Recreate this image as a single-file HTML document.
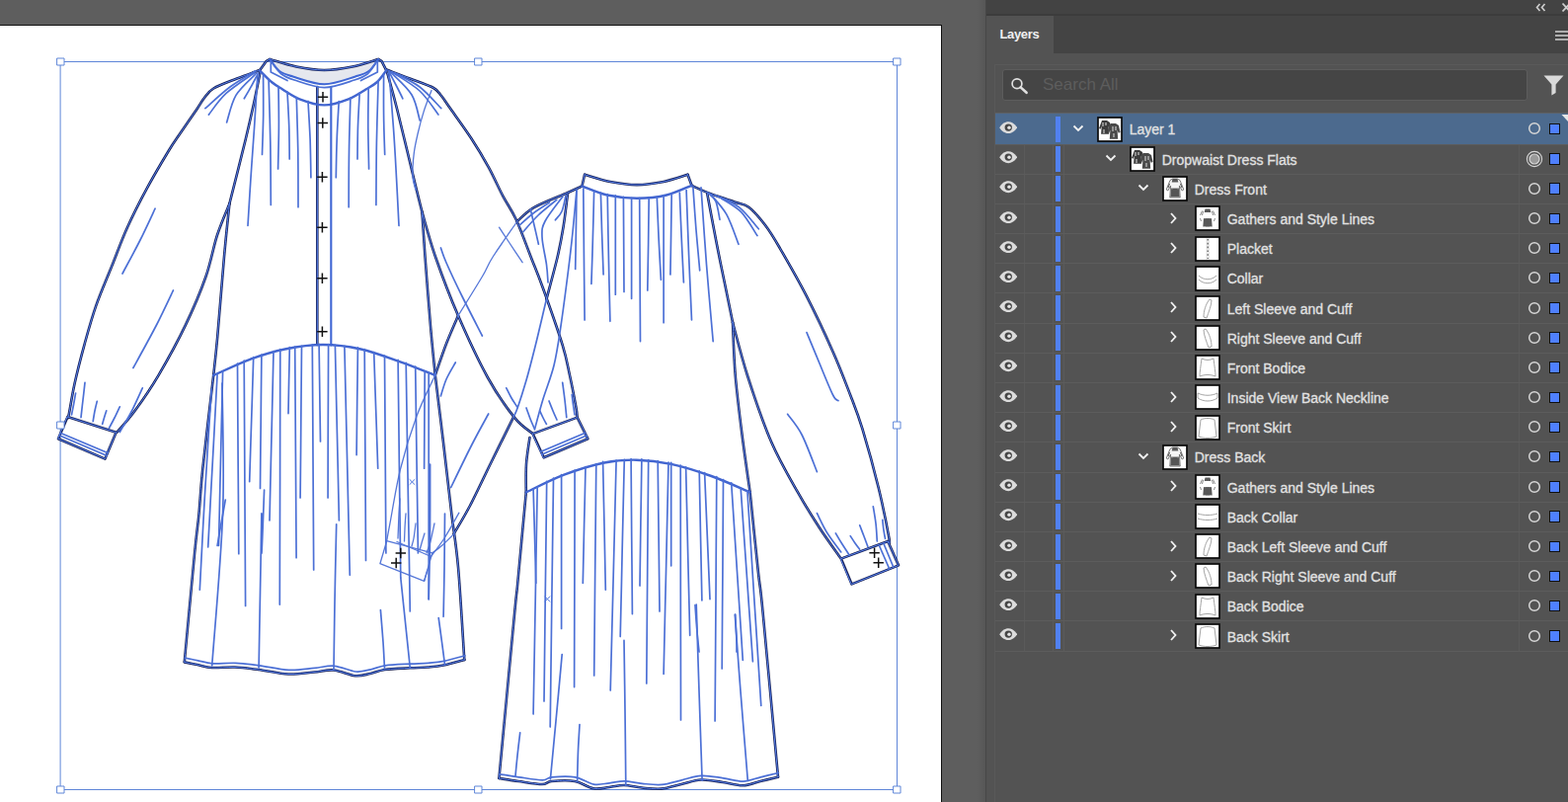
<!DOCTYPE html>
<html><head><meta charset="utf-8"><title>Layers</title>
<style>
html,body{margin:0;padding:0}
body{width:1588px;height:812px;overflow:hidden;background:#5e5e5e;position:relative;font-family:"Liberation Sans",sans-serif;font-size:14px;color:#dedede}
#ab{position:absolute;left:0;top:24.8px;width:953px;height:800px;background:#fff;border-top:1.8px solid #111;border-right:1.7px solid #111}
#art{position:absolute;left:0;top:0;width:1000px;height:812px}
#gut{position:absolute;left:990px;top:0;width:8px;height:812px;background:linear-gradient(to right,#5e5e5e,#565656)}
#pn{position:absolute;left:998px;top:0;width:590px;height:812px;background:#535353;border-left:1.5px solid #474747;box-sizing:border-box}
#top{position:absolute;left:0;top:0;width:590px;height:13.5px;background:#434343;border-bottom:2.5px solid #3c3c3c}
#tabs{position:absolute;left:0;top:16px;width:590px;height:38px;background:#444444}
#tab{position:absolute;left:0;top:0;width:68px;height:39px;background:#535353}
#tab span{position:absolute;left:13.5px;top:10.5px;font-size:13px;color:#f0f0f0;font-weight:bold;letter-spacing:-0.35px}
#sb{position:absolute;left:16px;top:70px;width:532px;height:32px;background:#454545;border:1px solid #5d5d5d;border-radius:3px;box-sizing:border-box}
#sb span{position:absolute;left:40px;top:5px;font-size:17px;color:#5d5d5d;line-height:20px}
#lst{position:absolute;left:8px;top:65px;width:582px;height:747px;border-left:1px solid #595959;border-top:1px solid #595959}
.row{position:absolute;left:9px;width:581px;height:30.18px;box-sizing:border-box;border-bottom:1px solid #5c5c5c}
.row.sel{background:#4c6a8e}
.row.sel::before{content:'';position:absolute;left:0;top:-2px;width:100%;height:2px;background:#4c6a8e;border-top:1px solid #5d6268}
.row .eye{position:absolute;left:3.6px;top:6.6px;width:18.5px;height:12.4px}
.row .bar{position:absolute;left:61.2px;top:1.6px;width:5.2px;height:26px;background:#5181f1}
.row .chev{position:absolute;top:7.7px;width:12px;height:12px;fill:none;stroke:#f2f2f2;stroke-width:1.8}
.row .th{position:absolute;top:1.4px;width:26px;height:26px}
.row .nm{position:absolute;top:7.1px;margin-left:-0.3px;line-height:16px;white-space:nowrap;color:#e2e2e2;-webkit-text-stroke:0.3px #e2e2e2}
.row .tg{position:absolute;left:537px;top:5.1px;width:18px;height:18px}
.row .sq{position:absolute;left:560.5px;top:8.6px;width:9.5px;height:9.5px;background:#4f80ff;border:1px solid #101010}
.vl{position:absolute;top:116px;width:1px;height:543px;background:#5a5a5a}
</style></head><body>
<div id="ab"></div>
<svg id="art" viewBox="0 0 1000 812" fill="none" stroke-linecap="round" stroke-linejoin="round">
<path d="M273.3 60.0C277.8 61.2 290.8 65.7 300.0 67.5C309.2 69.3 318.9 71.0 328.4 71.0C337.9 71.0 347.9 69.3 357.0 67.5C366.1 65.7 378.8 61.2 383.1 60.0 " fill="none"/>
<path d="M273.3 60.0C277.8 61.2 290.8 65.7 300.0 67.5C309.2 69.3 318.9 71.0 328.4 71.0C337.9 71.0 347.9 69.3 357.0 67.5C366.1 65.7 378.8 61.2 383.1 60.0L383.1 60.0C381.5 62.0 377.4 69.1 373.5 72.0C369.6 74.9 367.5 75.3 360.0 77.5C352.5 79.7 339.0 85.2 328.4 85.2C317.8 85.2 304.2 79.7 296.6 77.5C289.0 75.3 286.9 74.9 283.0 72.0C279.1 69.1 274.9 62.0 273.3 60.0Z" fill="#e5e7ee" stroke="none"/>
<rect x="61.5" y="62.5" width="847" height="737" stroke="#5f86d8" stroke-width="1"/>
<g stroke="#182258" stroke-width="2.6">
<path d="M273.3 60.0C277.8 61.2 290.8 65.7 300.0 67.5C309.2 69.3 318.9 71.0 328.4 71.0C337.9 71.0 347.9 69.3 357.0 67.5C366.1 65.7 378.8 61.2 383.1 60.0"/>
<path d="M273.3 60.0L269.8 61.8L263.0 71.3"/>
<path d="M383.1 60.0L386.5 61.8L391.3 71.3"/>
<path d="M263.0 71.0C259.2 72.4 247.8 76.4 240.0 79.5C232.2 82.6 221.8 86.2 216.3 89.5C210.8 92.8 209.8 95.5 207.0 99.0C204.2 102.5 203.7 104.2 199.6 110.2C195.5 116.2 187.4 127.8 182.5 135.0C177.6 142.2 175.9 144.2 170.3 153.5C164.7 162.8 155.6 178.1 148.7 190.9C141.8 203.7 134.9 217.1 129.0 230.3C123.0 243.5 118.3 256.8 113.0 270.0C107.7 283.2 101.9 296.3 97.3 309.4C92.7 322.5 89.1 335.7 85.5 348.8C81.9 361.9 78.2 376.4 75.6 388.2C73.0 400.0 70.9 414.1 69.7 419.8C68.5 425.5 68.7 422.1 68.5 422.6"/>
<path d="M263.6 72.5C262.5 77.9 259.5 93.5 257.0 105.0C254.5 116.5 252.8 124.4 248.7 141.3C244.6 158.2 235.1 195.5 232.4 206.3"/>
<path d="M232.4 206.3C230.3 211.6 224.0 225.7 220.0 238.0C216.0 250.3 213.8 264.8 208.5 280.0C203.2 295.2 195.9 312.4 187.9 329.1C179.9 345.8 168.8 365.9 160.3 380.3C151.8 394.8 143.6 406.3 136.7 415.8C129.8 425.3 121.6 433.9 118.6 437.5"/>
<path d="M68.5 422.0L117.6 437.8L106.4 464.6L59.0 444.3Z"/>
<path d="M232.4 206.3C231.5 215.2 229.0 237.5 227.0 260.0C225.0 282.5 222.0 321.3 220.2 341.3C218.4 361.3 216.9 373.6 216.2 380.1"/>
<path d="M427.4 214.5C427.9 222.1 429.1 240.8 430.5 260.0C431.9 279.2 434.3 310.0 436.0 330.0C437.7 350.0 440.0 371.8 440.8 380.1"/>
<path d="M392.2 73.6C393.8 79.7 397.2 91.0 402.0 110.0C406.8 129.0 416.5 170.0 420.7 187.4C424.9 204.8 426.3 210.0 427.4 214.5"/>
<path d="M321.3 88.0L321.3 349.0"/>
<path d="M391.3 70.5C395.2 72.0 407.1 76.4 415.0 79.5C422.9 82.6 433.7 86.1 439.0 89.0C444.3 91.9 444.1 93.5 447.0 97.0C449.9 100.5 451.2 102.9 456.2 110.0C461.2 117.1 470.5 129.7 476.9 139.5C483.3 149.3 489.3 159.2 494.7 169.1C500.1 178.9 504.7 189.7 509.4 198.6C514.1 207.5 517.9 211.9 522.7 222.3C527.5 232.7 533.5 249.4 538.0 261.0C542.5 272.6 544.7 277.3 550.0 292.0C555.3 306.7 565.2 334.7 569.7 349.4C574.2 364.1 574.7 369.6 577.0 380.0C579.3 390.4 582.0 404.7 583.3 411.8C584.6 418.9 584.4 420.8 584.6 422.6"/>
<path d="M427.4 214.5C429.7 222.1 434.9 242.5 441.0 260.0C447.1 277.5 455.2 299.3 464.0 319.6C472.8 339.9 484.3 364.8 493.8 382.0C503.3 399.2 513.3 413.1 520.9 422.6C528.5 432.1 536.5 436.4 539.6 439.1"/>
<path d="M539.6 439.1L584.6 422.6L595.4 444.3L550.7 463.3Z"/>
<path d="M216.2 380.1C214.4 396.0 207.6 452.2 205.2 475.5C202.8 498.8 202.8 505.9 201.5 520.0C200.2 534.1 199.5 535.0 197.1 560.0C194.7 585.0 188.5 651.7 186.8 670.0"/>
<path d="M440.8 380.1C442.2 391.4 446.2 424.7 449.0 448.0C451.8 471.3 454.8 499.0 457.3 520.0C459.8 541.0 461.8 549.3 464.0 574.0C466.2 598.7 469.2 652.3 470.3 668.0"/>
<path d="M186.8 670.4C189.0 670.8 195.3 672.1 200.0 673.0C204.7 673.9 208.4 675.6 214.7 676.0C221.0 676.4 230.1 675.2 238.0 675.5C245.9 675.8 253.0 676.8 262.0 678.0C271.0 679.2 282.7 682.1 292.0 682.5C301.3 682.9 310.3 681.2 318.0 680.5C325.7 679.8 331.1 677.9 338.0 678.5C344.9 679.1 353.5 683.6 359.7 684.2C365.9 684.8 370.0 683.0 375.0 682.0C380.0 681.0 382.8 679.0 389.5 678.0C396.2 677.0 408.1 676.7 415.3 676.3C422.6 675.9 427.4 676.0 433.0 675.5C438.6 675.0 442.9 674.8 449.1 673.5C455.3 672.2 466.8 668.9 470.3 668.0"/>
<path d="M592.1 176.8C596.4 178.0 609.2 182.3 618.0 184.0C626.8 185.7 636.0 187.1 645.0 187.1C654.0 187.1 663.4 185.7 672.0 184.0C680.6 182.3 692.4 178.0 696.5 176.8"/>
<path d="M592.1 176.8L589.4 188.5"/>
<path d="M696.5 176.8L700.5 187.8"/>
<path d="M589.4 188.5C586.9 189.6 582.6 191.6 574.5 195.2C566.4 198.8 549.2 205.2 540.7 210.1C532.2 215.0 526.4 222.1 523.5 224.5"/>
<path d="M464.0 319.6C462.0 324.3 455.8 338.1 452.0 348.0C448.2 357.9 442.8 374.0 441.0 379.2"/>
<path d="M575.0 196.0C574.2 201.7 572.3 219.2 570.5 230.0C568.7 240.8 567.3 248.8 564.4 261.0C561.5 273.2 555.1 296.4 553.3 303.5"/>
<path d="M520.4 421.7C516.4 429.8 503.9 454.9 496.5 470.0C489.1 485.1 482.2 500.2 476.0 512.0C469.8 523.8 462.2 536.1 459.4 540.9"/>
<path d="M536.5 443.0C535.9 447.5 533.6 460.8 533.0 470.0C532.4 479.2 532.8 493.8 532.8 498.5"/>
<path d="M700.5 187.8C703.1 189.0 709.1 192.1 716.3 194.9C723.5 197.7 736.9 202.0 743.9 204.5C750.9 207.0 753.1 205.9 758.3 209.8C763.5 213.7 769.8 221.2 775.0 228.0C780.2 234.8 782.5 238.6 789.4 250.5C796.3 262.4 807.5 281.6 816.5 299.2C825.5 316.8 836.1 339.4 843.6 356.2C851.1 373.0 856.2 387.0 861.2 400.0C866.2 413.0 868.6 418.6 873.4 434.2C878.1 449.8 885.2 475.3 889.7 493.8C894.2 512.3 898.9 536.3 900.5 545.3C902.1 554.3 899.4 547.5 899.2 548.0"/>
<path d="M716.3 196.3C717.4 202.2 720.8 220.3 723.0 232.0C725.2 243.7 726.6 251.0 729.8 266.7C733.0 282.4 740.0 316.4 742.0 326.3"/>
<path d="M742.0 326.3C744.5 335.2 750.4 359.8 756.9 380.0C763.4 400.2 772.7 427.9 781.3 447.8C789.9 467.7 800.3 484.8 808.4 499.2C816.5 513.6 822.8 523.4 830.0 534.5C837.2 545.6 848.2 560.4 851.8 565.6"/>
<path d="M851.8 565.6L899.2 548.0L910.0 572.4L862.6 591.4Z"/>
<path d="M742.0 326.3C742.5 335.2 743.1 361.1 744.7 380.0C746.3 398.9 749.0 420.3 751.5 440.0C754.0 459.7 758.2 488.6 759.6 498.3"/>
<path d="M532.8 498.5C531.4 513.8 526.2 569.8 524.3 590.0C522.4 610.2 524.4 587.0 521.2 620.0C518.1 653.0 508.0 760.0 505.4 788.0"/>
<path d="M759.6 498.3C761.0 511.9 765.8 559.7 768.0 580.0C770.2 600.3 769.3 585.5 772.6 620.0C775.9 654.5 785.4 758.9 788.0 786.7"/>
<path d="M505.4 788.0C508.7 788.5 517.7 790.0 525.0 791.0C532.3 792.0 543.4 794.0 549.0 794.0C554.6 794.0 553.1 791.5 558.6 791.0C564.1 790.5 574.9 789.8 582.0 791.0C589.1 792.2 595.2 797.3 601.0 798.3C606.8 799.3 611.8 797.5 617.0 797.0C622.2 796.5 626.5 794.9 632.0 795.0C637.5 795.1 643.7 796.9 650.0 797.5C656.3 798.1 663.1 799.2 669.8 798.6C676.5 798.0 683.3 795.5 690.0 794.0C696.7 792.5 703.0 789.8 710.0 789.5C717.0 789.2 724.9 791.0 732.0 792.0C739.1 793.0 746.2 795.5 752.5 795.3C758.8 795.1 764.1 792.4 770.0 791.0C775.9 789.6 785.0 787.4 788.0 786.7"/>
</g>
<g stroke="#5580ee" stroke-width="1.0">
<path d="M273.3 60.0C277.8 61.2 290.8 65.7 300.0 67.5C309.2 69.3 318.9 71.0 328.4 71.0C337.9 71.0 347.9 69.3 357.0 67.5C366.1 65.7 378.8 61.2 383.1 60.0"/>
<path d="M273.3 60.0L269.8 61.8L263.0 71.3"/>
<path d="M383.1 60.0L386.5 61.8L391.3 71.3"/>
<path d="M263.0 71.0C259.2 72.4 247.8 76.4 240.0 79.5C232.2 82.6 221.8 86.2 216.3 89.5C210.8 92.8 209.8 95.5 207.0 99.0C204.2 102.5 203.7 104.2 199.6 110.2C195.5 116.2 187.4 127.8 182.5 135.0C177.6 142.2 175.9 144.2 170.3 153.5C164.7 162.8 155.6 178.1 148.7 190.9C141.8 203.7 134.9 217.1 129.0 230.3C123.0 243.5 118.3 256.8 113.0 270.0C107.7 283.2 101.9 296.3 97.3 309.4C92.7 322.5 89.1 335.7 85.5 348.8C81.9 361.9 78.2 376.4 75.6 388.2C73.0 400.0 70.9 414.1 69.7 419.8C68.5 425.5 68.7 422.1 68.5 422.6"/>
<path d="M263.6 72.5C262.5 77.9 259.5 93.5 257.0 105.0C254.5 116.5 252.8 124.4 248.7 141.3C244.6 158.2 235.1 195.5 232.4 206.3"/>
<path d="M232.4 206.3C230.3 211.6 224.0 225.7 220.0 238.0C216.0 250.3 213.8 264.8 208.5 280.0C203.2 295.2 195.9 312.4 187.9 329.1C179.9 345.8 168.8 365.9 160.3 380.3C151.8 394.8 143.6 406.3 136.7 415.8C129.8 425.3 121.6 433.9 118.6 437.5"/>
<path d="M68.5 422.0L117.6 437.8L106.4 464.6L59.0 444.3Z"/>
<path d="M232.4 206.3C231.5 215.2 229.0 237.5 227.0 260.0C225.0 282.5 222.0 321.3 220.2 341.3C218.4 361.3 216.9 373.6 216.2 380.1"/>
<path d="M427.4 214.5C427.9 222.1 429.1 240.8 430.5 260.0C431.9 279.2 434.3 310.0 436.0 330.0C437.7 350.0 440.0 371.8 440.8 380.1"/>
<path d="M392.2 73.6C393.8 79.7 397.2 91.0 402.0 110.0C406.8 129.0 416.5 170.0 420.7 187.4C424.9 204.8 426.3 210.0 427.4 214.5"/>
<path d="M321.3 88.0L321.3 349.0"/>
<path d="M391.3 70.5C395.2 72.0 407.1 76.4 415.0 79.5C422.9 82.6 433.7 86.1 439.0 89.0C444.3 91.9 444.1 93.5 447.0 97.0C449.9 100.5 451.2 102.9 456.2 110.0C461.2 117.1 470.5 129.7 476.9 139.5C483.3 149.3 489.3 159.2 494.7 169.1C500.1 178.9 504.7 189.7 509.4 198.6C514.1 207.5 517.9 211.9 522.7 222.3C527.5 232.7 533.5 249.4 538.0 261.0C542.5 272.6 544.7 277.3 550.0 292.0C555.3 306.7 565.2 334.7 569.7 349.4C574.2 364.1 574.7 369.6 577.0 380.0C579.3 390.4 582.0 404.7 583.3 411.8C584.6 418.9 584.4 420.8 584.6 422.6"/>
<path d="M427.4 214.5C429.7 222.1 434.9 242.5 441.0 260.0C447.1 277.5 455.2 299.3 464.0 319.6C472.8 339.9 484.3 364.8 493.8 382.0C503.3 399.2 513.3 413.1 520.9 422.6C528.5 432.1 536.5 436.4 539.6 439.1"/>
<path d="M539.6 439.1L584.6 422.6L595.4 444.3L550.7 463.3Z"/>
<path d="M216.2 380.1C214.4 396.0 207.6 452.2 205.2 475.5C202.8 498.8 202.8 505.9 201.5 520.0C200.2 534.1 199.5 535.0 197.1 560.0C194.7 585.0 188.5 651.7 186.8 670.0"/>
<path d="M440.8 380.1C442.2 391.4 446.2 424.7 449.0 448.0C451.8 471.3 454.8 499.0 457.3 520.0C459.8 541.0 461.8 549.3 464.0 574.0C466.2 598.7 469.2 652.3 470.3 668.0"/>
<path d="M186.8 670.4C189.0 670.8 195.3 672.1 200.0 673.0C204.7 673.9 208.4 675.6 214.7 676.0C221.0 676.4 230.1 675.2 238.0 675.5C245.9 675.8 253.0 676.8 262.0 678.0C271.0 679.2 282.7 682.1 292.0 682.5C301.3 682.9 310.3 681.2 318.0 680.5C325.7 679.8 331.1 677.9 338.0 678.5C344.9 679.1 353.5 683.6 359.7 684.2C365.9 684.8 370.0 683.0 375.0 682.0C380.0 681.0 382.8 679.0 389.5 678.0C396.2 677.0 408.1 676.7 415.3 676.3C422.6 675.9 427.4 676.0 433.0 675.5C438.6 675.0 442.9 674.8 449.1 673.5C455.3 672.2 466.8 668.9 470.3 668.0"/>
<path d="M592.1 176.8C596.4 178.0 609.2 182.3 618.0 184.0C626.8 185.7 636.0 187.1 645.0 187.1C654.0 187.1 663.4 185.7 672.0 184.0C680.6 182.3 692.4 178.0 696.5 176.8"/>
<path d="M592.1 176.8L589.4 188.5"/>
<path d="M696.5 176.8L700.5 187.8"/>
<path d="M589.4 188.5C586.9 189.6 582.6 191.6 574.5 195.2C566.4 198.8 549.2 205.2 540.7 210.1C532.2 215.0 526.4 222.1 523.5 224.5"/>
<path d="M464.0 319.6C462.0 324.3 455.8 338.1 452.0 348.0C448.2 357.9 442.8 374.0 441.0 379.2"/>
<path d="M575.0 196.0C574.2 201.7 572.3 219.2 570.5 230.0C568.7 240.8 567.3 248.8 564.4 261.0C561.5 273.2 555.1 296.4 553.3 303.5"/>
<path d="M520.4 421.7C516.4 429.8 503.9 454.9 496.5 470.0C489.1 485.1 482.2 500.2 476.0 512.0C469.8 523.8 462.2 536.1 459.4 540.9"/>
<path d="M536.5 443.0C535.9 447.5 533.6 460.8 533.0 470.0C532.4 479.2 532.8 493.8 532.8 498.5"/>
<path d="M700.5 187.8C703.1 189.0 709.1 192.1 716.3 194.9C723.5 197.7 736.9 202.0 743.9 204.5C750.9 207.0 753.1 205.9 758.3 209.8C763.5 213.7 769.8 221.2 775.0 228.0C780.2 234.8 782.5 238.6 789.4 250.5C796.3 262.4 807.5 281.6 816.5 299.2C825.5 316.8 836.1 339.4 843.6 356.2C851.1 373.0 856.2 387.0 861.2 400.0C866.2 413.0 868.6 418.6 873.4 434.2C878.1 449.8 885.2 475.3 889.7 493.8C894.2 512.3 898.9 536.3 900.5 545.3C902.1 554.3 899.4 547.5 899.2 548.0"/>
<path d="M716.3 196.3C717.4 202.2 720.8 220.3 723.0 232.0C725.2 243.7 726.6 251.0 729.8 266.7C733.0 282.4 740.0 316.4 742.0 326.3"/>
<path d="M742.0 326.3C744.5 335.2 750.4 359.8 756.9 380.0C763.4 400.2 772.7 427.9 781.3 447.8C789.9 467.7 800.3 484.8 808.4 499.2C816.5 513.6 822.8 523.4 830.0 534.5C837.2 545.6 848.2 560.4 851.8 565.6"/>
<path d="M851.8 565.6L899.2 548.0L910.0 572.4L862.6 591.4Z"/>
<path d="M742.0 326.3C742.5 335.2 743.1 361.1 744.7 380.0C746.3 398.9 749.0 420.3 751.5 440.0C754.0 459.7 758.2 488.6 759.6 498.3"/>
<path d="M532.8 498.5C531.4 513.8 526.2 569.8 524.3 590.0C522.4 610.2 524.4 587.0 521.2 620.0C518.1 653.0 508.0 760.0 505.4 788.0"/>
<path d="M759.6 498.3C761.0 511.9 765.8 559.7 768.0 580.0C770.2 600.3 769.3 585.5 772.6 620.0C775.9 654.5 785.4 758.9 788.0 786.7"/>
<path d="M505.4 788.0C508.7 788.5 517.7 790.0 525.0 791.0C532.3 792.0 543.4 794.0 549.0 794.0C554.6 794.0 553.1 791.5 558.6 791.0C564.1 790.5 574.9 789.8 582.0 791.0C589.1 792.2 595.2 797.3 601.0 798.3C606.8 799.3 611.8 797.5 617.0 797.0C622.2 796.5 626.5 794.9 632.0 795.0C637.5 795.1 643.7 796.9 650.0 797.5C656.3 798.1 663.1 799.2 669.8 798.6C676.5 798.0 683.3 795.5 690.0 794.0C696.7 792.5 703.0 789.8 710.0 789.5C717.0 789.2 724.9 791.0 732.0 792.0C739.1 793.0 746.2 795.5 752.5 795.3C758.8 795.1 764.1 792.4 770.0 791.0C775.9 789.6 785.0 787.4 788.0 786.7"/>
</g>
<g stroke="#4265d0" stroke-width="2.4">
<path d="M263.0 71.3C265.0 73.2 271.1 79.8 275.0 83.0C278.9 86.2 281.5 87.6 286.2 90.5C290.9 93.4 296.4 97.6 303.4 100.3C310.4 103.0 320.1 106.4 328.4 106.4C336.7 106.4 346.0 103.0 353.0 100.3C360.0 97.6 365.7 93.4 370.5 90.5C375.3 87.6 378.5 86.2 382.0 83.0C385.5 79.8 389.8 73.2 391.3 71.3"/>
<path d="M216.2 380.1C222.4 377.4 241.1 368.2 253.2 363.8C265.3 359.4 276.3 356.0 288.6 353.5C300.9 351.0 314.2 349.0 327.0 349.0C339.8 349.0 352.1 350.5 365.4 353.5C378.7 356.5 394.2 362.4 406.8 366.8C419.4 371.2 435.1 377.9 440.8 380.1"/>
<path d="M589.4 188.5C593.7 190.0 605.7 195.5 615.0 197.5C624.3 199.5 635.0 200.7 645.0 200.7C655.0 200.7 665.8 199.7 675.0 197.5C684.2 195.3 696.2 189.4 700.5 187.8"/>
<path d="M532.8 498.5C539.2 495.5 558.1 485.7 571.3 480.7C584.5 475.7 599.8 471.0 612.0 468.5C624.2 466.0 633.2 465.5 644.5 465.7C655.8 465.9 667.1 467.1 679.7 469.8C692.4 472.5 707.1 477.2 720.4 482.0C733.7 486.8 753.1 495.6 759.6 498.3"/>
</g>
<g stroke="#3f66d4" stroke-width="2.1">
<path d="M273.3 60.0C274.9 62.0 279.1 69.1 283.0 72.0C286.9 74.9 289.0 75.3 296.6 77.5C304.2 79.7 317.8 85.2 328.4 85.2C339.0 85.2 352.5 79.7 360.0 77.5C367.5 75.3 369.6 74.9 373.5 72.0C377.4 69.1 381.5 62.0 383.1 60.0"/>
<path d="M335.3 88.0L335.3 349.5"/>
</g>
<g stroke="#5577d8" stroke-width="1.3">
<path d="M437.0 91.5C435.7 95.1 431.4 105.8 429.1 113.1C426.8 120.3 424.8 128.0 423.2 135.0C421.6 142.0 420.2 147.6 419.3 154.9C418.4 162.2 417.7 172.8 418.0 179.0C418.3 185.2 420.5 189.8 421.0 192.0"/>
<path d="M523.5 224.5C519.5 230.4 505.1 250.8 499.2 260.0C493.3 269.2 494.3 270.1 488.4 280.0C482.5 289.9 468.1 313.0 464.0 319.6"/>
<path d="M441.0 379.2C437.8 386.2 427.9 405.3 422.0 421.3C416.1 437.3 410.0 456.9 405.5 475.0C401.0 493.1 397.3 517.6 395.0 529.7C392.7 541.8 392.2 544.7 391.7 547.7"/>
<path d="M459.4 540.9C457.5 542.8 451.6 548.8 448.0 552.0C444.4 555.2 439.5 558.6 437.8 559.9"/>
<path d="M464.9 519.2C462.4 523.5 455.0 537.3 450.0 545.0C445.0 552.7 437.5 561.9 435.0 565.3"/>
<path d="M391.7 547.7L384.9 570.7L429.6 588.3L437.8 559.9Z"/>
<path d="M402.0 548.5L436.5 563.5"/>
<path d="M429.6 588.3L433.0 577.0"/>
<path d="M405.0 505.0C404.8 507.5 404.3 513.3 404.0 520.0C403.7 526.7 403.2 540.8 403.0 545.0"/>
<path d="M411.0 520.0C410.8 522.5 410.2 530.3 410.0 535.0C409.8 539.7 409.6 545.8 409.5 548.0"/>
<path d="M421.0 530.0C420.7 532.5 419.7 541.2 419.0 545.0C418.3 548.8 417.3 551.7 417.0 553.0"/>
<path d="M430.0 540.0C429.5 541.7 427.8 547.2 427.0 550.0C426.2 552.8 425.3 555.8 425.0 557.0"/>
<path d="M440.0 530.0C439.3 533.0 437.3 543.0 436.0 548.0C434.7 553.0 432.7 558.0 432.0 560.0"/>
<path d="M505.5 230.2C507.2 232.8 512.1 240.1 516.0 246.0C519.9 251.9 526.9 262.4 529.1 265.7"/>
</g>
<g stroke="#4c70d6" stroke-width="1.7">
<path d="M276.0 64.0C277.5 65.8 281.3 72.2 285.0 75.0C288.7 77.8 290.8 78.7 298.0 81.0C305.2 83.3 318.2 88.6 328.4 88.6C338.6 88.6 351.7 83.3 359.0 81.0C366.3 78.7 368.4 77.8 372.0 75.0C375.6 72.2 379.1 65.8 380.5 64.0"/>
<path d="M274.3 62.5L274.3 73.0L291.0 81.5"/>
<path d="M382.3 62.5L382.3 73.0L365.5 81.5"/>
<path d="M60.5 441.0L108.0 461.2"/>
<path d="M61.5 438.5L109.0 458.5"/>
<path d="M549.0 460.0L594.0 441.0"/>
<path d="M547.8 457.3L592.8 438.3"/>
<path d="M187.4 666.2C189.6 666.6 195.9 667.9 200.6 668.8C205.2 669.7 209.0 671.4 215.3 671.8C221.6 672.2 230.7 671.0 238.6 671.3C246.5 671.6 253.6 672.6 262.6 673.8C271.6 675.0 283.3 677.9 292.6 678.3C301.9 678.7 310.9 677.0 318.6 676.3C326.3 675.6 331.7 673.7 338.6 674.3C345.6 674.9 354.1 679.4 360.3 680.0C366.5 680.6 370.6 678.8 375.6 677.8C380.6 676.8 383.4 674.8 390.1 673.8C396.8 672.8 408.7 672.5 415.9 672.1C423.2 671.7 428.0 671.8 433.6 671.3C439.2 670.8 443.5 670.5 449.7 669.3C455.9 668.0 467.4 664.7 470.9 663.8"/>
<path d="M258.7 71.8C254.4 74.5 241.5 81.7 233.0 88.0C224.5 94.3 212.1 106.1 207.9 109.7"/>
<path d="M258.0 73.5C253.2 77.0 236.9 87.3 229.1 94.4C221.3 101.5 214.3 112.5 211.4 116.1"/>
<path d="M259.2 74.7C255.8 78.3 243.9 88.2 239.0 96.4C234.1 104.6 231.2 119.4 229.6 124.0"/>
<path d="M260.2 76.7C259.0 78.9 255.2 86.2 253.0 90.0C250.8 93.8 248.2 98.2 247.3 99.8"/>
<path d="M261.0 73.5C260.4 82.9 258.7 112.2 257.5 130.0C256.3 147.8 255.1 163.6 254.0 180.0C252.9 196.4 251.5 220.4 251.0 228.5"/>
<path d="M157.1 211.2C154.6 216.5 147.5 232.0 142.0 243.0C136.5 254.0 127.0 271.3 124.0 277.0"/>
<path d="M175.5 293.9C172.6 299.9 164.8 316.9 158.0 330.0C151.2 343.1 138.8 365.4 134.9 372.5"/>
<path d="M86.0 387.4C85.7 390.3 84.7 399.1 84.0 405.0C83.3 410.9 82.3 419.7 82.0 422.6"/>
<path d="M98.3 406.3C97.9 407.9 96.7 412.6 96.0 416.0C95.3 419.4 94.5 424.9 94.2 426.7"/>
<path d="M107.8 415.8C107.4 417.0 106.2 420.7 105.5 423.0C104.8 425.3 104.0 428.3 103.7 429.4"/>
<path d="M121.3 411.8C120.4 413.7 117.8 419.4 116.0 423.0C114.2 426.6 111.4 431.7 110.5 433.4"/>
<path d="M144.3 392.8C142.4 396.8 136.8 409.6 133.0 417.0C129.2 424.4 123.2 434.1 121.3 437.5"/>
<path d="M76.6 398.2C76.2 400.2 75.2 406.4 74.5 410.0C73.8 413.6 72.8 418.3 72.5 420.0"/>
<path d="M393.6 71.7C394.8 74.1 398.6 81.3 401.0 86.0C403.4 90.7 406.8 97.5 407.9 99.8"/>
<path d="M395.5 73.0C399.1 76.8 412.1 87.8 417.0 96.0C421.9 104.2 423.8 117.7 425.2 122.0"/>
<path d="M397.5 73.3C402.1 76.4 417.3 84.9 425.0 92.0C432.7 99.1 440.8 112.0 443.9 116.0"/>
<path d="M399.5 73.8C403.8 76.2 417.1 82.0 425.0 88.0C432.9 94.0 443.2 106.1 446.8 109.7"/>
<path d="M394.0 73.5C394.8 82.9 397.2 112.2 398.5 130.0C399.8 147.8 400.6 163.6 401.5 180.0C402.4 196.4 403.6 220.4 404.0 228.5"/>
<path d="M446.4 251.0C447.3 253.5 448.4 257.8 452.0 266.0C455.6 274.2 461.9 287.7 468.0 300.0C474.1 312.3 485.0 333.3 488.4 340.0"/>
<path d="M512.8 392.8C513.7 394.5 516.2 399.8 518.0 403.0C519.8 406.2 522.7 410.3 523.6 411.8"/>
<path d="M533.0 413.0C533.7 414.8 535.7 420.6 537.0 424.0C538.3 427.4 540.3 431.8 541.0 433.4"/>
<path d="M546.7 415.8C547.2 417.0 548.9 420.7 550.0 423.0C551.1 425.3 552.8 428.3 553.4 429.4"/>
<path d="M556.0 406.0C556.7 407.7 558.7 412.8 560.0 416.0C561.3 419.2 563.3 423.5 564.0 425.0"/>
<path d="M569.7 387.4C570.1 390.3 571.3 399.1 572.0 405.0C572.7 410.9 573.5 419.7 573.8 422.6"/>
<path d="M579.2 399.6C579.4 401.3 580.0 406.6 580.5 410.0C581.0 413.4 581.8 418.3 582.0 420.0"/>
<path d="M282.0 87.7C282.1 94.6 282.5 115.4 282.4 129.3C282.3 143.2 281.7 164.0 281.6 170.9"/>
<path d="M373.2 88.7C373.1 95.6 372.7 116.1 372.8 129.8C372.9 143.5 373.5 164.1 373.6 170.9"/>
<path d="M291.0 93.2C291.3 98.9 292.3 115.8 292.7 127.1C293.1 138.3 293.1 155.3 293.2 160.9"/>
<path d="M364.2 94.0C363.9 99.6 362.9 116.3 362.5 127.5C362.1 138.6 362.1 155.3 362.0 160.9"/>
<path d="M300.3 98.5C300.5 107.8 301.5 135.6 301.8 154.1C302.0 172.6 302.0 200.4 302.0 209.7"/>
<path d="M354.9 99.2C354.7 108.4 353.7 136.1 353.5 154.5C353.2 172.9 353.2 200.5 353.2 209.7"/>
<path d="M312.0 102.4C312.3 108.8 313.6 128.2 314.1 141.0C314.5 153.9 314.8 173.3 314.9 179.7"/>
<path d="M343.2 102.7C342.9 109.1 341.6 128.4 341.2 141.2C340.7 154.0 340.4 173.3 340.3 179.7"/>
<path d="M272.1 80.4C272.4 91.0 273.4 122.7 273.8 143.9C274.2 165.1 274.2 196.9 274.3 207.5"/>
<path d="M383.1 81.8C382.8 92.3 381.8 123.7 381.4 144.7C381.0 165.6 381.0 197.0 380.9 207.5"/>
<path d="M266.6 75.4C266.6 82.1 266.8 102.4 266.7 115.9C266.5 129.5 265.7 149.7 265.5 156.5"/>
<path d="M388.6 75.8C388.6 82.6 388.4 102.7 388.6 116.2C388.7 129.6 389.5 149.8 389.7 156.5"/>
<path d="M220.1 378.4C219.3 393.0 217.0 436.9 215.4 466.1C213.8 495.4 211.4 539.3 210.7 553.9"/>
<path d="M225.6 376.0C225.2 390.7 224.2 434.8 223.5 464.2C222.8 493.7 221.8 537.8 221.5 552.5"/>
<path d="M240.5 368.2C240.6 384.3 240.9 432.4 241.1 464.5C241.4 496.5 241.7 544.7 241.8 560.7"/>
<path d="M247.2 365.2C247.3 385.9 247.7 448.0 247.9 489.4C248.1 530.7 248.5 592.8 248.6 613.5"/>
<path d="M256.7 361.6C256.4 372.1 255.4 403.6 254.7 424.6C254.0 445.7 253.0 477.2 252.7 487.7"/>
<path d="M264.9 359.2C264.7 370.5 264.4 404.3 264.2 426.9C263.9 449.4 263.6 483.2 263.5 494.5"/>
<path d="M277.0 355.7C276.7 369.9 275.7 412.8 275.0 441.3C274.3 469.9 273.3 512.7 273.0 527.0"/>
<path d="M283.8 353.7C283.8 375.2 283.6 439.8 283.6 482.9C283.5 526.0 283.3 590.6 283.3 612.1"/>
<path d="M293.3 351.7C293.2 357.3 292.9 374.0 292.6 385.2C292.4 396.3 292.1 413.0 292.0 418.6"/>
<path d="M298.7 351.1C298.8 368.9 299.2 422.3 299.4 457.9C299.6 493.5 300.0 546.9 300.1 564.7"/>
<path d="M305.5 350.3C305.4 363.1 305.0 401.5 304.8 427.2C304.6 452.8 304.3 491.2 304.1 504.0"/>
<path d="M316.3 349.0C316.5 368.0 316.8 425.0 317.0 463.0C317.2 500.9 317.6 557.9 317.7 576.9"/>
<path d="M323.1 348.3C323.2 356.5 323.6 381.2 323.8 397.6C324.0 414.1 324.4 438.8 324.5 447.0"/>
<path d="M332.6 348.5C332.6 361.4 332.4 400.3 332.3 426.2C332.2 452.2 332.1 491.0 332.1 504.0"/>
<path d="M339.4 349.3C339.7 364.1 340.7 408.5 341.4 438.1C342.1 467.8 343.1 512.2 343.4 527.0"/>
<path d="M348.9 350.4C349.3 369.7 350.7 427.7 351.6 466.3C352.5 505.0 353.8 563.0 354.3 582.3"/>
<path d="M362.4 351.9C362.3 361.0 362.0 388.2 361.7 406.3C361.5 424.4 361.2 451.5 361.1 460.6"/>
<path d="M369.2 353.5C369.3 371.3 369.6 424.8 369.9 460.5C370.1 496.1 370.4 549.6 370.5 567.4"/>
<path d="M378.7 356.6C379.0 366.4 380.0 395.8 380.7 415.4C381.4 435.0 382.4 464.4 382.7 474.2"/>
<path d="M389.5 360.0C389.6 376.7 390.0 426.7 390.2 460.0C390.4 493.3 390.8 543.3 390.9 560.0"/>
<path d="M403.1 364.4C403.3 382.8 404.0 437.9 404.4 474.7C404.9 511.5 405.5 566.6 405.8 585.0"/>
<path d="M411.2 367.3C411.5 388.3 412.5 451.2 413.2 493.1C413.9 535.0 414.9 597.9 415.3 618.9"/>
<path d="M420.7 371.0C420.9 386.8 421.6 434.0 422.0 465.5C422.5 497.0 423.2 544.3 423.4 560.0"/>
<path d="M430.2 375.9C430.1 384.1 430.0 408.7 429.9 425.1C429.8 441.4 429.7 466.0 429.6 474.2"/>
<path d="M434.2 377.5C434.2 396.6 434.2 453.9 434.2 492.1C434.2 530.3 434.2 587.6 434.2 606.7"/>
<path d="M225.0 388.0C225.1 410.0 227.3 472.3 225.6 520.0C223.9 567.7 216.5 648.3 214.7 674.0"/>
<path d="M264.9 520.0C264.7 533.3 264.0 574.0 263.5 600.0C263.0 626.0 262.3 663.3 262.1 676.0"/>
<path d="M340.7 530.8C340.4 544.0 339.4 585.5 339.0 610.0C338.6 634.5 338.2 666.7 338.0 678.0"/>
<path d="M385.4 617.6C385.8 623.0 387.3 640.1 388.0 650.0C388.7 659.9 389.2 672.5 389.5 677.0"/>
<path d="M405.8 585.0C406.7 593.3 409.4 619.8 411.0 635.0C412.6 650.2 414.6 669.2 415.3 676.0"/>
<path d="M444.2 625.7C444.8 629.8 446.4 642.1 447.5 650.0C448.6 657.9 450.0 669.2 450.5 673.0"/>
<path d="M228.3 506.0C227.6 510.0 225.4 522.2 224.0 530.0C222.6 537.8 220.8 548.8 220.1 552.5"/>
<path d="M267.6 496.0C267.2 506.7 265.4 556.0 265.0 560.0C264.6 564.0 264.9 526.7 264.9 520.0"/>
<path d="M214.2 394.0C213.1 411.7 209.5 466.1 207.5 500.0C205.5 533.9 203.2 581.0 202.3 597.2"/>
<path d="M450.5 520.0C450.4 529.2 450.2 557.6 450.0 575.0C449.8 592.4 449.2 616.1 449.1 624.3"/>
<path d="M435.6 470.0C435.6 481.7 435.7 517.2 435.5 540.0C435.3 562.8 434.4 595.6 434.2 606.7"/>
<path d="M553.3 303.5C551.4 311.2 545.6 336.4 542.2 350.0C538.8 363.6 536.0 374.7 533.0 385.0C530.0 395.3 526.6 405.9 524.5 412.0C522.4 418.1 521.1 420.1 520.4 421.7"/>
<path d="M584.0 192.0C583.3 199.2 581.4 221.3 580.0 235.0C578.6 248.7 577.5 258.2 575.5 274.0C573.5 289.8 570.4 314.0 568.0 330.0C565.6 346.0 564.0 357.7 561.0 370.0C558.0 382.3 553.3 393.2 550.0 404.0C546.7 414.8 542.8 429.8 541.4 435.0"/>
<path d="M494.7 419.0C491.9 424.2 484.3 437.6 478.0 450.0C471.7 462.4 460.2 486.2 456.7 493.5"/>
<path d="M461.3 367.0C459.8 369.8 454.5 378.3 452.0 384.0C449.5 389.7 447.3 398.2 446.4 401.0"/>
<path d="M895.1 550.7L904.6 573.8"/>
<path d="M890.5 552.5L900.5 575.5"/>
<path d="M505.8 783.8C509.1 784.3 518.1 785.8 525.4 786.8C532.7 787.8 543.8 789.8 549.4 789.8C555.0 789.8 553.5 787.3 559.0 786.8C564.5 786.3 575.3 785.6 582.4 786.8C589.5 788.0 595.6 793.1 601.4 794.1C607.2 795.1 612.2 793.3 617.4 792.8C622.6 792.2 626.9 790.7 632.4 790.8C637.9 790.9 644.1 792.7 650.4 793.3C656.7 793.9 663.5 795.0 670.2 794.4C676.9 793.8 683.7 791.3 690.4 789.8C697.1 788.3 703.4 785.6 710.4 785.3C717.4 785.0 725.3 786.8 732.4 787.8C739.5 788.8 746.6 791.3 752.9 791.1C759.2 790.9 764.5 788.2 770.4 786.8C776.3 785.4 785.4 783.2 788.4 782.5"/>
<path d="M584.0 192.5C583.9 199.2 583.6 219.2 583.4 232.5C583.2 245.8 582.8 265.8 582.7 272.5"/>
<path d="M590.8 191.2C590.9 202.2 591.2 235.4 591.4 257.6C591.6 279.7 592.0 312.9 592.1 324.0"/>
<path d="M601.6 193.9C601.4 201.7 600.9 225.0 600.4 240.6C600.0 256.2 599.2 279.6 598.9 287.4"/>
<path d="M608.4 195.2C608.6 202.1 609.2 222.8 609.6 236.6C610.1 250.3 610.9 271.0 611.1 277.9"/>
<path d="M615.2 196.6C615.4 207.3 615.9 239.5 616.4 260.9C616.8 282.4 617.6 314.6 617.9 325.3"/>
<path d="M623.3 197.9C623.3 206.3 623.3 231.4 623.3 248.1C623.3 264.8 623.3 289.9 623.3 298.2"/>
<path d="M631.4 199.3C631.5 207.3 631.6 231.4 631.7 247.4C631.8 263.4 631.9 287.5 632.0 295.5"/>
<path d="M639.6 200.7C639.6 209.1 639.6 234.5 639.6 251.5C639.6 268.4 639.6 293.8 639.6 302.3"/>
<path d="M647.7 200.7C647.8 212.7 647.9 249.0 648.1 273.1C648.2 297.3 648.4 333.6 648.5 345.6"/>
<path d="M657.2 200.7C657.1 208.4 656.8 231.8 656.6 247.4C656.3 263.0 656.0 286.4 655.8 294.1"/>
<path d="M665.3 199.3C665.6 206.3 666.5 227.3 667.1 241.3C667.8 255.3 669.0 276.3 669.4 283.3"/>
<path d="M672.1 197.9C672.1 208.7 672.1 240.8 672.1 262.3C672.1 283.8 672.1 315.9 672.1 326.7"/>
<path d="M680.2 196.6C680.1 203.4 679.8 223.7 679.6 237.2C679.4 250.8 679.0 271.1 678.9 277.9"/>
<path d="M688.3 195.2C688.7 202.8 689.5 225.5 690.2 240.6C690.9 255.8 692.0 278.5 692.4 286.0"/>
<path d="M695.1 192.5C695.5 203.5 696.7 236.3 697.6 258.2C698.5 280.1 700.0 313.0 700.5 324.0"/>
<path d="M701.9 189.8C702.4 196.8 703.8 217.8 704.9 231.8C706.1 245.8 708.1 266.8 708.7 273.8"/>
<path d="M710.0 189.8C710.9 202.8 713.5 241.8 715.5 267.7C717.5 293.7 721.1 332.7 722.2 345.6"/>
<path d="M573.0 198.0C572.3 200.7 570.8 209.9 569.0 214.0C567.2 218.1 563.5 221.3 562.4 222.8"/>
<path d="M569.8 199.2C566.8 203.3 555.5 217.2 552.0 224.0C548.5 230.8 548.8 232.7 549.0 240.0C549.2 247.3 552.5 260.3 553.5 268.0C554.5 275.7 554.8 283.0 555.0 286.0"/>
<path d="M563.9 202.2C560.8 204.8 550.7 212.6 545.0 218.0C539.3 223.4 532.4 231.9 529.9 234.7"/>
<path d="M556.5 205.0C553.8 206.8 545.2 212.1 540.0 216.0C534.8 219.9 527.9 226.6 525.5 228.7"/>
<path d="M537.3 211.8C537.9 214.5 539.6 222.1 541.0 228.0C542.4 233.9 544.7 244.0 545.4 247.2"/>
<path d="M716.8 195.2C718.2 196.7 722.9 199.3 724.9 203.8C726.9 208.3 728.3 219.2 729.0 222.3"/>
<path d="M719.5 196.6C722.2 200.0 731.0 208.5 735.7 216.9C740.5 225.4 745.9 242.2 748.0 247.3"/>
<path d="M724.9 197.9C728.9 199.9 741.4 204.2 748.6 209.9C755.8 215.5 765.0 228.2 768.3 231.8"/>
<path d="M730.4 200.7C733.7 203.0 744.5 208.3 750.6 214.6C756.7 220.9 764.2 234.6 766.9 238.6"/>
<path d="M817.0 336.6C819.2 341.8 825.6 357.4 830.0 368.0C834.4 378.6 840.4 393.7 843.6 400.0C846.8 406.3 848.1 404.8 849.0 405.7"/>
<path d="M797.6 419.3C800.0 422.8 807.0 430.3 812.0 440.0C817.0 449.7 824.8 471.3 827.4 477.6"/>
<path d="M827.4 519.6C829.2 523.0 833.9 533.5 838.0 540.0C842.1 546.5 849.5 555.8 851.8 558.9"/>
<path d="M846.3 539.9C847.4 541.8 850.7 547.4 853.0 551.0C855.3 554.6 858.8 559.8 859.9 561.6"/>
<path d="M861.2 542.6C862.0 543.8 864.4 547.7 866.0 550.0C867.6 552.3 869.9 555.2 870.7 556.2"/>
<path d="M870.7 531.8C871.4 533.7 873.6 539.4 875.0 543.0C876.4 546.6 878.2 551.7 878.9 553.4"/>
<path d="M884.3 512.8C884.8 515.7 886.3 524.1 887.0 530.0C887.7 535.9 888.1 545.0 888.3 548.0"/>
<path d="M893.8 526.3C894.0 528.1 894.5 533.8 895.0 537.0C895.5 540.2 896.2 543.9 896.5 545.3"/>
<path d="M540.1 495.1C540.4 503.1 541.0 526.9 541.5 542.8C541.9 558.6 542.6 582.5 542.8 590.4"/>
<path d="M544.2 493.2C543.9 512.4 542.8 569.8 542.2 608.1C541.5 646.4 540.5 703.8 540.1 722.9"/>
<path d="M553.7 487.3C553.5 505.9 552.8 561.5 552.3 598.6C551.9 635.7 551.2 691.4 551.0 709.9"/>
<path d="M560.5 484.2C560.2 505.2 559.4 568.1 558.8 610.1C558.3 652.0 557.5 715.0 557.2 735.9"/>
<path d="M568.6 480.5C568.6 493.5 568.6 532.5 568.6 558.5C568.6 584.5 568.6 623.5 568.6 636.5"/>
<path d="M582.1 476.0C582.1 494.3 582.0 549.2 581.9 585.8C581.8 622.4 581.6 677.3 581.6 695.6"/>
<path d="M593.0 472.7C592.8 482.5 592.1 511.9 591.6 531.6C591.2 551.2 590.5 580.6 590.3 590.4"/>
<path d="M603.8 469.5C603.6 487.3 603.1 540.9 602.7 576.7C602.4 612.4 601.8 666.0 601.7 683.9"/>
<path d="M610.6 467.4C610.8 478.2 611.5 510.7 612.0 532.3C612.4 553.9 613.1 586.4 613.3 597.2"/>
<path d="M624.1 466.0C623.6 485.4 622.2 543.7 621.2 582.5C620.2 621.4 618.7 679.7 618.2 699.1"/>
<path d="M632.3 465.3C631.9 480.2 630.9 525.0 630.2 554.9C629.6 584.8 628.6 629.7 628.2 644.6"/>
<path d="M639.1 464.7C639.2 477.7 639.5 517.0 639.7 543.1C640.0 569.3 640.3 608.5 640.4 621.6"/>
<path d="M649.9 464.8C649.7 475.5 649.3 507.6 648.9 529.0C648.6 550.4 648.2 582.4 648.0 593.1"/>
<path d="M656.7 465.6C656.5 484.5 656.0 541.1 655.7 578.8C655.4 616.6 654.9 673.2 654.8 692.0"/>
<path d="M666.2 466.7C666.3 479.4 666.8 517.4 667.1 542.8C667.4 568.1 667.9 606.2 668.0 618.9"/>
<path d="M677.0 468.0C676.6 485.9 675.4 539.5 674.6 575.3C673.7 611.0 672.5 664.7 672.1 682.5"/>
<path d="M679.7 468.3C679.7 477.0 679.7 503.1 679.7 520.5C679.7 538.0 679.7 564.1 679.7 572.8"/>
<path d="M689.2 471.1C689.2 492.6 689.3 557.1 689.3 600.0C689.4 643.0 689.4 707.4 689.5 728.9"/>
<path d="M694.6 472.8C694.9 487.0 696.0 529.6 696.6 558.0C697.3 586.4 698.3 629.0 698.7 643.3"/>
<path d="M708.2 476.8C708.4 487.8 709.1 520.6 709.5 542.4C710.0 564.3 710.6 597.1 710.9 608.0"/>
<path d="M713.6 478.5C714.0 489.1 715.4 521.2 716.3 542.6C717.2 563.9 718.5 596.0 719.0 606.7"/>
<path d="M725.8 482.7C725.6 503.3 725.2 565.1 725.0 606.4C724.7 647.6 724.3 709.4 724.1 730.0"/>
<path d="M732.5 485.6C732.4 501.5 732.1 549.3 731.9 581.2C731.6 613.1 731.3 660.9 731.2 676.9"/>
<path d="M740.7 488.9C741.6 503.9 744.6 548.8 746.5 578.7C748.4 608.6 751.4 653.5 752.3 668.5"/>
<path d="M750.2 494.4C751.2 509.0 754.2 552.9 756.3 582.1C758.3 611.3 761.3 655.2 762.4 669.8"/>
<path d="M756.9 497.2C758.1 515.3 761.5 569.6 763.8 605.9C766.2 642.1 769.6 696.4 770.8 714.5"/>
<path d="M526.7 741.8C526.2 745.7 524.8 757.7 524.0 765.0C523.2 772.3 522.3 782.2 522.0 785.6"/>
<path d="M569.2 662.6C568.2 673.8 565.0 708.9 563.0 730.0C561.0 751.1 558.3 779.2 557.4 789.0"/>
<path d="M587.0 733.5C586.8 737.9 585.9 750.5 585.5 760.0C585.1 769.5 584.8 785.2 584.6 790.3"/>
<path d="M632.0 648.4C632.2 660.3 632.7 695.6 633.0 720.0C633.3 744.4 633.7 782.5 633.8 795.0"/>
<path d="M705.2 612.0C705.7 626.7 707.0 670.3 708.0 700.0C709.0 729.7 710.6 775.2 711.1 790.3"/>
<path d="M744.3 622.4C745.2 635.3 747.8 672.0 750.0 700.0C752.2 728.0 756.1 775.2 757.3 790.3"/>
<path d="M704.0 612.7C704.3 617.2 705.3 632.1 706.0 640.0C706.7 647.9 707.7 656.7 708.0 660.0"/>
<path d="M744.7 622.0C744.9 626.7 745.8 643.7 746.0 650.0C746.2 656.3 746.0 658.3 746.0 660.0"/>
</g>
<g stroke="#111" stroke-width="1.5" stroke-linecap="butt">
<path d="M321.8 98.3H332.2M327 93.1V103.5"/>
<path d="M321.6 124.5H332.0M326.8 119.3V129.7"/>
<path d="M321.2 179.2H331.59999999999997M326.4 174.0V184.39999999999998"/>
<path d="M321.2 230.3H331.59999999999997M326.4 225.10000000000002V235.5"/>
<path d="M321.2 281.7H331.59999999999997M326.4 276.5V286.9"/>
<path d="M321.2 335.8H331.59999999999997M326.4 330.6V341.0"/>
<path d="M400.6 560H411.0M405.8 554.8V565.2"/>
<path d="M396.0 570H406.4M401.2 564.8V575.2"/>
<path d="M880.4 559.7H890.8000000000001M885.6 554.5V564.9000000000001"/>
<path d="M884.5 569.7H894.9000000000001M889.7 564.5V574.9000000000001"/>
</g>
<g stroke="#4a72dc" stroke-width="1">
<path d="M414.9 485.5L419.9 490.5M419.9 485.5L414.9 490.5"/>
<path d="M551.8 604.0L556.8 609.0M556.8 604.0L551.8 609.0"/>
</g>
<g fill="#fff" stroke="#5f86d8" stroke-width="1">
<rect x="58.0" y="59.0" width="7" height="7"/>
<rect x="481.0" y="59.0" width="7" height="7"/>
<rect x="905.0" y="59.0" width="7" height="7"/>
<rect x="58.0" y="427.0" width="7" height="7"/>
<rect x="905.0" y="427.0" width="7" height="7"/>
<rect x="58.0" y="796.0" width="7" height="7"/>
<rect x="481.0" y="796.0" width="7" height="7"/>
<rect x="905.0" y="796.0" width="7" height="7"/>
</g>
</svg>
<div id="gut"></div>
<div id="pn">
<svg width="0" height="0" style="position:absolute"><defs>
<g id="eye"><path d="M0.2 6 C3.2 1.6 6 0.2 9 0.2 C12 0.2 14.8 1.6 17.8 6 C14.8 10.4 12 11.8 9 11.8 C6 11.8 3.2 10.4 0.2 6 Z" fill="#dcdcdc"/><circle cx="9" cy="5.9" r="3.6" fill="#474747"/><circle cx="9.7" cy="6" r="1.7" fill="#e4e4e4"/></g>
<g id="t-all"><rect x="1" y="1" width="24" height="24" fill="#fff" stroke="#0a0a0a" stroke-width="1.7"/><path d="M5 4 h5 l3 2 l1.5 6 l-1.8 0.8 l-1.2 -3 l0.6 8 h-8 l0.6 -8 l-1.2 3 l-1.5 -0.8 z" fill="#3c3c3c"/><path d="M14 7 h5 l3 2 l1.6 7 l-1.8 0.8 l-1.2 -3 l0.6 9 h-8.4 l0.6 -9 l-1.2 3 l-1.6 -0.8 l1.4 -7 z" fill="#4a4a4a"/><path d="M6 6 v4 M9 6 v3 M16 10 v5 M19 10 v4 M7 13 v4 M17 17 v4" stroke="#bdbdbd" stroke-width="1.3" fill="none"/></g>
<g id="t-dress"><rect x="1" y="1" width="24" height="24" fill="#fff" stroke="#0a0a0a" stroke-width="1.7"/><path d="M10.5 3 h5 l2.5 1.5 l3.8 9.5 l-1.6 1 l-2.8 -5 l0.8 12 h-10.4 l0.8 -12 l-2.8 5 l-1.6 -1 l3.8 -9.5 z" fill="#f4f4f4" stroke="#6a6a6a" stroke-width="0.9"/><path d="M10.5 3 h5 l0.8 3.6 h-6.6 z" fill="#5a5a5a"/><path d="M9 12.5 h8 l0.8 9 h-9.6 z" fill="#6c6c6c"/><path d="M10 14 v7 M12 13 v8 M14 13 v8 M16 14 v7" stroke="#3a3a3a" stroke-width="0.9"/><path d="M6 12 l1.5 -4 M20 12 l-1.5 -4" stroke="#555" stroke-width="1"/></g>
<g id="t-gath"><rect x="1" y="1" width="24" height="24" fill="#fff" stroke="#0a0a0a" stroke-width="1.7"/><path d="M10.5 3.5 h5 l0.8 3.4 h-6.6 z" fill="#5a5a5a"/><path d="M9 13 h8 l0.8 8.5 h-9.6 z" fill="#707070"/><path d="M10 14 v7 M12 13.5 v8 M14 13.5 v8 M16 14 v7" stroke="#3a3a3a" stroke-width="0.9"/><path d="M5.5 13 l1 3 M20.5 13 l-1 3 M7.5 5.5 l-2 4.5 M18.5 5.5 l2 4.5 M8.5 6 l-1 4 M17.5 6 l1 4" stroke="#8a8a8a" stroke-width="1"/></g>
<g id="t-plk"><rect x="1" y="1" width="24" height="24" fill="#fff" stroke="#0a0a0a" stroke-width="1.7"/><path d="M12.2 2 v22 M14.2 2 v22" stroke="#c9c9c9" stroke-width="0.7"/><path d="M13.2 3 v20" stroke="#777" stroke-width="1.6" stroke-dasharray="1.6 2.2"/></g>
<g id="t-col"><rect x="1" y="1" width="24" height="24" fill="#fff" stroke="#0a0a0a" stroke-width="1.7"/><path d="M4 10 C9 15 17 15 22 10 M4 14 C9 19 17 19 22 14" fill="none" stroke="#9a9a9a" stroke-width="0.9"/></g>
<g id="t-ls"><rect x="1" y="1" width="24" height="24" fill="#fff" stroke="#0a0a0a" stroke-width="1.7"/><path d="M15 4 C11 9 9 16 9 22 L12 23 C14 17 17 10 17 5 Z" fill="none" stroke="#9a9a9a" stroke-width="0.9"/></g>
<g id="t-rs"><rect x="1" y="1" width="24" height="24" fill="#fff" stroke="#0a0a0a" stroke-width="1.7"/><path d="M11 4 C15 9 17 16 17 22 L14 23 C12 17 9 10 9 5 Z" fill="none" stroke="#9a9a9a" stroke-width="0.9"/></g>
<g id="t-bod"><rect x="1" y="1" width="24" height="24" fill="#fff" stroke="#0a0a0a" stroke-width="1.7"/><path d="M7 4 C6 12 5 18 5 22 C10 20 16 20 21 22 C21 18 20 12 19 4 C15 6 11 6 7 4 Z" fill="none" stroke="#9a9a9a" stroke-width="0.9"/></g>
<g id="t-neck"><rect x="1" y="1" width="24" height="24" fill="#fff" stroke="#0a0a0a" stroke-width="1.7"/><path d="M3 9 C9 12 17 12 23 9 M3 14 C9 18 17 18 23 14 M3 9 V14 M23 9 V14" fill="none" stroke="#9a9a9a" stroke-width="0.9"/></g>
<g id="t-skirt"><rect x="1" y="1" width="24" height="24" fill="#fff" stroke="#0a0a0a" stroke-width="1.7"/><path d="M6 5 C10 3 16 3 20 5 L22 22 C17 24 9 24 4 22 Z" fill="none" stroke="#9a9a9a" stroke-width="0.9"/></g>
<g id="t-bcol"><rect x="1" y="1" width="24" height="24" fill="#fff" stroke="#0a0a0a" stroke-width="1.7"/><path d="M3 10 C9 12 17 12 23 10 M3 15 C9 17 17 17 23 15" fill="none" stroke="#9a9a9a" stroke-width="0.9"/></g>
</defs></svg>
<div id="top"><svg style="position:absolute;left:555px;top:2px" width="36" height="11" viewBox="0 0 36 11"><path d="M5.5 2 L2.5 5.5 L5.5 9 M10.5 2 L7.5 5.5 L10.5 9" fill="none" stroke="#cfcfcf" stroke-width="1.6"/><path d="M28.5 1.5 L36 9.5 M36 1.5 L28.5 9.5" fill="none" stroke="#cfcfcf" stroke-width="1.8"/></svg></div>
<div id="tabs"><div id="tab"><span>Layers</span></div>
<svg style="position:absolute;left:576px;top:15px" width="14" height="10" viewBox="0 0 14 10"><path d="M0 1 H14 M0 5 H14 M0 9 H14" stroke="#cfcfcf" stroke-width="1.4"/></svg></div>
<div id="lst"></div>
<div id="sb"><svg style="position:absolute;left:4.6px;top:4.6px" width="22" height="22" viewBox="0 0 22 22"><circle cx="9" cy="8.7" r="4.9" fill="none" stroke="#e0e0e0" stroke-width="1.7"/><path d="M12.6 12.4 L18.6 17.8" stroke="#e0e0e0" stroke-width="2.6" stroke-linecap="round"/></svg><span>Search All</span></div>
<svg style="position:absolute;left:564px;top:76px" width="22" height="22" viewBox="0 0 22 22"><path d="M0.5 0.5 H20.5 L12.6 9.5 V18 L8.4 20.5 V9.5 Z" fill="#dadada"/></svg>
<i class="vl" style="left:38px"></i><i class="vl" style="left:67px"></i><i class="vl" style="left:78px"></i><i class="vl" style="left:539px"></i>
<div class="row sel" style="top:116.4px"><svg class="eye" viewBox="0 0 18 12"><use href="#eye"/></svg><i class="bar"></i><svg class="chev" style="left:78px" viewBox="0 0 12 12"><path d="M1.5 3.5 L6 8 L10.5 3.5" /></svg><svg class="th" style="left:103px" viewBox="0 0 26 26"><use href="#t-all"/></svg><span class="nm" style="left:136px">Layer 1</span><svg class="tg" viewBox="0 0 18 18"><circle cx="9" cy="9" r="5.3" fill="none" stroke="#d6d6d6" stroke-width="1.5"/></svg><i class="sq"></i></div>
<div class="row" style="top:146.58px"><svg class="eye" viewBox="0 0 18 12"><use href="#eye"/></svg><i class="bar"></i><svg class="chev" style="left:111px" viewBox="0 0 12 12"><path d="M1.5 3.5 L6 8 L10.5 3.5" /></svg><svg class="th" style="left:136px" viewBox="0 0 26 26"><use href="#t-all"/></svg><span class="nm" style="left:169px">Dropwaist Dress Flats</span><svg class="tg" viewBox="0 0 18 18"><circle cx="9" cy="9" r="7.6" fill="none" stroke="#d6d6d6" stroke-width="1.1"/><circle cx="9" cy="9" r="5" fill="#9a9a9a" stroke="#d6d6d6" stroke-width="1.2"/></svg><i class="sq"></i></div>
<div class="row" style="top:176.76px"><svg class="eye" viewBox="0 0 18 12"><use href="#eye"/></svg><i class="bar"></i><svg class="chev" style="left:144px" viewBox="0 0 12 12"><path d="M1.5 3.5 L6 8 L10.5 3.5" /></svg><svg class="th" style="left:169px" viewBox="0 0 26 26"><use href="#t-dress"/></svg><span class="nm" style="left:202px">Dress Front</span><svg class="tg" viewBox="0 0 18 18"><circle cx="9" cy="9" r="5.3" fill="none" stroke="#d6d6d6" stroke-width="1.5"/></svg><i class="sq"></i></div>
<div class="row" style="top:206.94px"><svg class="eye" viewBox="0 0 18 12"><use href="#eye"/></svg><i class="bar"></i><svg class="chev" style="left:173.5px" viewBox="0 0 12 12"><path d="M4 1 L8.5 6 L4 11" /></svg><svg class="th" style="left:202px" viewBox="0 0 26 26"><use href="#t-gath"/></svg><span class="nm" style="left:235px">Gathers and Style Lines</span><svg class="tg" viewBox="0 0 18 18"><circle cx="9" cy="9" r="5.3" fill="none" stroke="#d6d6d6" stroke-width="1.5"/></svg><i class="sq"></i></div>
<div class="row" style="top:237.12px"><svg class="eye" viewBox="0 0 18 12"><use href="#eye"/></svg><i class="bar"></i><svg class="chev" style="left:173.5px" viewBox="0 0 12 12"><path d="M4 1 L8.5 6 L4 11" /></svg><svg class="th" style="left:202px" viewBox="0 0 26 26"><use href="#t-plk"/></svg><span class="nm" style="left:235px">Placket</span><svg class="tg" viewBox="0 0 18 18"><circle cx="9" cy="9" r="5.3" fill="none" stroke="#d6d6d6" stroke-width="1.5"/></svg><i class="sq"></i></div>
<div class="row" style="top:267.3px"><svg class="eye" viewBox="0 0 18 12"><use href="#eye"/></svg><i class="bar"></i><svg class="th" style="left:202px" viewBox="0 0 26 26"><use href="#t-col"/></svg><span class="nm" style="left:235px">Collar</span><svg class="tg" viewBox="0 0 18 18"><circle cx="9" cy="9" r="5.3" fill="none" stroke="#d6d6d6" stroke-width="1.5"/></svg><i class="sq"></i></div>
<div class="row" style="top:297.48px"><svg class="eye" viewBox="0 0 18 12"><use href="#eye"/></svg><i class="bar"></i><svg class="chev" style="left:173.5px" viewBox="0 0 12 12"><path d="M4 1 L8.5 6 L4 11" /></svg><svg class="th" style="left:202px" viewBox="0 0 26 26"><use href="#t-ls"/></svg><span class="nm" style="left:235px">Left Sleeve and Cuff</span><svg class="tg" viewBox="0 0 18 18"><circle cx="9" cy="9" r="5.3" fill="none" stroke="#d6d6d6" stroke-width="1.5"/></svg><i class="sq"></i></div>
<div class="row" style="top:327.66px"><svg class="eye" viewBox="0 0 18 12"><use href="#eye"/></svg><i class="bar"></i><svg class="chev" style="left:173.5px" viewBox="0 0 12 12"><path d="M4 1 L8.5 6 L4 11" /></svg><svg class="th" style="left:202px" viewBox="0 0 26 26"><use href="#t-rs"/></svg><span class="nm" style="left:235px">Right Sleeve and Cuff</span><svg class="tg" viewBox="0 0 18 18"><circle cx="9" cy="9" r="5.3" fill="none" stroke="#d6d6d6" stroke-width="1.5"/></svg><i class="sq"></i></div>
<div class="row" style="top:357.84px"><svg class="eye" viewBox="0 0 18 12"><use href="#eye"/></svg><i class="bar"></i><svg class="th" style="left:202px" viewBox="0 0 26 26"><use href="#t-bod"/></svg><span class="nm" style="left:235px">Front Bodice</span><svg class="tg" viewBox="0 0 18 18"><circle cx="9" cy="9" r="5.3" fill="none" stroke="#d6d6d6" stroke-width="1.5"/></svg><i class="sq"></i></div>
<div class="row" style="top:388.02px"><svg class="eye" viewBox="0 0 18 12"><use href="#eye"/></svg><i class="bar"></i><svg class="chev" style="left:173.5px" viewBox="0 0 12 12"><path d="M4 1 L8.5 6 L4 11" /></svg><svg class="th" style="left:202px" viewBox="0 0 26 26"><use href="#t-neck"/></svg><span class="nm" style="left:235px">Inside View Back Neckline</span><svg class="tg" viewBox="0 0 18 18"><circle cx="9" cy="9" r="5.3" fill="none" stroke="#d6d6d6" stroke-width="1.5"/></svg><i class="sq"></i></div>
<div class="row" style="top:418.2px"><svg class="eye" viewBox="0 0 18 12"><use href="#eye"/></svg><i class="bar"></i><svg class="chev" style="left:173.5px" viewBox="0 0 12 12"><path d="M4 1 L8.5 6 L4 11" /></svg><svg class="th" style="left:202px" viewBox="0 0 26 26"><use href="#t-skirt"/></svg><span class="nm" style="left:235px">Front Skirt</span><svg class="tg" viewBox="0 0 18 18"><circle cx="9" cy="9" r="5.3" fill="none" stroke="#d6d6d6" stroke-width="1.5"/></svg><i class="sq"></i></div>
<div class="row" style="top:448.38px"><svg class="eye" viewBox="0 0 18 12"><use href="#eye"/></svg><i class="bar"></i><svg class="chev" style="left:144px" viewBox="0 0 12 12"><path d="M1.5 3.5 L6 8 L10.5 3.5" /></svg><svg class="th" style="left:169px" viewBox="0 0 26 26"><use href="#t-dress"/></svg><span class="nm" style="left:202px">Dress Back</span><svg class="tg" viewBox="0 0 18 18"><circle cx="9" cy="9" r="5.3" fill="none" stroke="#d6d6d6" stroke-width="1.5"/></svg><i class="sq"></i></div>
<div class="row" style="top:478.56px"><svg class="eye" viewBox="0 0 18 12"><use href="#eye"/></svg><i class="bar"></i><svg class="chev" style="left:173.5px" viewBox="0 0 12 12"><path d="M4 1 L8.5 6 L4 11" /></svg><svg class="th" style="left:202px" viewBox="0 0 26 26"><use href="#t-gath"/></svg><span class="nm" style="left:235px">Gathers and Style Lines</span><svg class="tg" viewBox="0 0 18 18"><circle cx="9" cy="9" r="5.3" fill="none" stroke="#d6d6d6" stroke-width="1.5"/></svg><i class="sq"></i></div>
<div class="row" style="top:508.74px"><svg class="eye" viewBox="0 0 18 12"><use href="#eye"/></svg><i class="bar"></i><svg class="th" style="left:202px" viewBox="0 0 26 26"><use href="#t-bcol"/></svg><span class="nm" style="left:235px">Back Collar</span><svg class="tg" viewBox="0 0 18 18"><circle cx="9" cy="9" r="5.3" fill="none" stroke="#d6d6d6" stroke-width="1.5"/></svg><i class="sq"></i></div>
<div class="row" style="top:538.92px"><svg class="eye" viewBox="0 0 18 12"><use href="#eye"/></svg><i class="bar"></i><svg class="chev" style="left:173.5px" viewBox="0 0 12 12"><path d="M4 1 L8.5 6 L4 11" /></svg><svg class="th" style="left:202px" viewBox="0 0 26 26"><use href="#t-ls"/></svg><span class="nm" style="left:235px">Back Left Sleeve and Cuff</span><svg class="tg" viewBox="0 0 18 18"><circle cx="9" cy="9" r="5.3" fill="none" stroke="#d6d6d6" stroke-width="1.5"/></svg><i class="sq"></i></div>
<div class="row" style="top:569.1px"><svg class="eye" viewBox="0 0 18 12"><use href="#eye"/></svg><i class="bar"></i><svg class="chev" style="left:173.5px" viewBox="0 0 12 12"><path d="M4 1 L8.5 6 L4 11" /></svg><svg class="th" style="left:202px" viewBox="0 0 26 26"><use href="#t-rs"/></svg><span class="nm" style="left:235px">Back Right Sleeve and Cuff</span><svg class="tg" viewBox="0 0 18 18"><circle cx="9" cy="9" r="5.3" fill="none" stroke="#d6d6d6" stroke-width="1.5"/></svg><i class="sq"></i></div>
<div class="row" style="top:599.28px"><svg class="eye" viewBox="0 0 18 12"><use href="#eye"/></svg><i class="bar"></i><svg class="th" style="left:202px" viewBox="0 0 26 26"><use href="#t-bod"/></svg><span class="nm" style="left:235px">Back Bodice</span><svg class="tg" viewBox="0 0 18 18"><circle cx="9" cy="9" r="5.3" fill="none" stroke="#d6d6d6" stroke-width="1.5"/></svg><i class="sq"></i></div>
<div class="row" style="top:629.46px"><svg class="eye" viewBox="0 0 18 12"><use href="#eye"/></svg><i class="bar"></i><svg class="chev" style="left:173.5px" viewBox="0 0 12 12"><path d="M4 1 L8.5 6 L4 11" /></svg><svg class="th" style="left:202px" viewBox="0 0 26 26"><use href="#t-skirt"/></svg><span class="nm" style="left:235px">Back Skirt</span><svg class="tg" viewBox="0 0 18 18"><circle cx="9" cy="9" r="5.3" fill="none" stroke="#d6d6d6" stroke-width="1.5"/></svg><i class="sq"></i></div>
<svg style="position:absolute;left:582px;top:116px" width="8" height="8" viewBox="0 0 8 8"><path d="M0.5 0 H8 V8 Z" fill="#e6e6e6"/></svg>
</div>
</body></html>
